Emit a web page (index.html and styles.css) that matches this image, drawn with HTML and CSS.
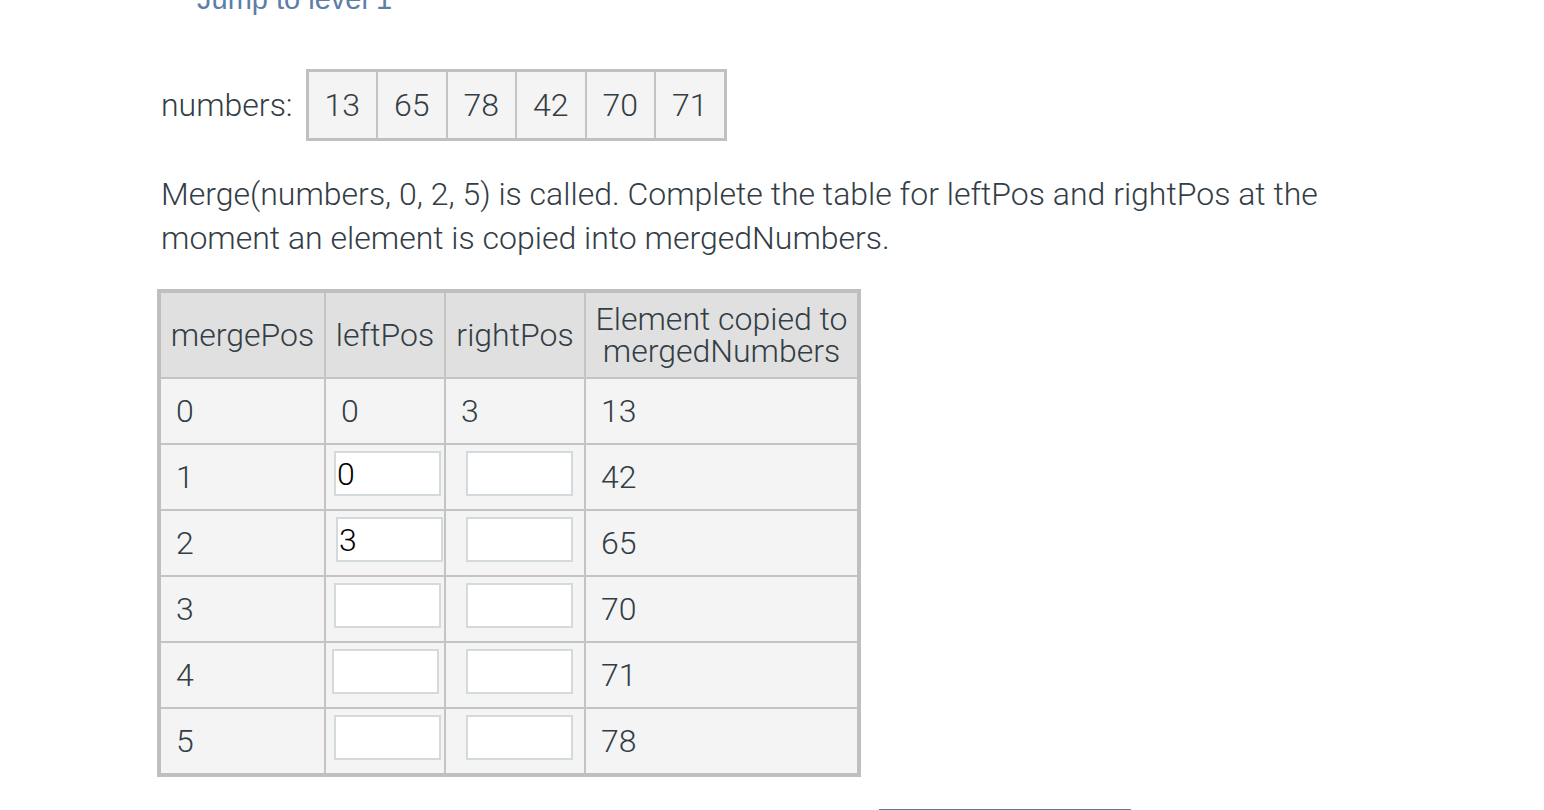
FILE: index.html
```html
<!DOCTYPE html>
<html>
<head>
<meta charset="utf-8">
<link rel="stylesheet" href="styles.css">
</head>
<body>
<main class="page">
  <a class="jump" href="#">Jump to level 1</a>
  <div class="array-row">
    <span class="array-label">numbers:</span>
    <div class="array">
      <span class="cell">13</span><span class="cell">65</span><span class="cell">78</span><span class="cell">42</span><span class="cell">70</span><span class="cell">71</span>
    </div>
  </div>
  <p class="prompt">Merge(numbers, 0, 2, 5) is called. Complete the table for leftPos and rightPos at the moment an element is copied into mergedNumbers.</p>
  <table class="merge">
    <thead>
      <tr><th class="c1">mergePos</th><th class="c2">leftPos</th><th class="c3">rightPos</th><th class="c4">Element copied to<br>mergedNumbers</th></tr>
    </thead>
    <tbody>
      <tr><td>0</td><td>0</td><td>3</td><td>13</td></tr>
      <tr><td>1</td><td class="in-l"><input class="box" value="0"></td><td class="in-r"><input class="box"></td><td>42</td></tr>
      <tr><td>2</td><td class="in-l"><input class="box shifted" value="3"></td><td class="in-r"><input class="box"></td><td>65</td></tr>
      <tr><td>3</td><td class="in-l"><input class="box"></td><td class="in-r"><input class="box"></td><td>70</td></tr>
      <tr><td>4</td><td class="in-l"><input class="box back"></td><td class="in-r"><input class="box"></td><td>71</td></tr>
      <tr><td>5</td><td class="in-l"><input class="box"></td><td class="in-r"><input class="box"></td><td>78</td></tr>
    </tbody>
  </table>
  <div class="actions"><span class="check-btn"></span></div>
</main>
</body>
</html>
```
FILE: styles.css
```css
html, body {
  margin: 0;
  padding: 0;
  background: #ffffff;
}
body {
  font-family: Roboto, "Noto Sans", sans-serif;
  font-weight: 300;
  color: #333d45;
  overflow: hidden;
}
.page {
  padding-left: 161px;
}
.jump {
  display: block;
  margin-top: -18px;
  margin-left: 36px;
  font-family: "Liberation Sans", Arial, sans-serif;
  font-weight: 400;
  font-size: 29px;
  line-height: 34px;
  color: #5d7ea7;
  text-decoration: none;
}
.array-row {
  display: flex;
  align-items: center;
  margin-top: 53px;
}
.array-label {
  font-size: 32px;
  margin-right: 13px;
}
.array {
  display: flex;
  border: 3px solid #c0c0c0;
  background: #f4f4f4;
}
.cell {
  width: 67.5px;
  height: 66px;
  display: flex;
  align-items: center;
  justify-content: center;
  font-size: 32px;
  border-left: 2px solid #c4c4c4;
}
.cell:first-child {
  border-left: none;
}
.prompt {
  margin: 31px 0 0 0;
  font-size: 32px;
  line-height: 44px;
  width: 1200px;
}
.merge {
  margin-top: 29px;
  margin-left: -4px;
  border-collapse: collapse;
  border: 4px solid #bfbfbf;
  font-size: 32px;
}
.merge th, .merge td {
  border: 2px solid #c4c4c4;
  padding: 0;
  font-weight: 300;
}
.merge th {
  background: #e0e0e0;
  height: 84px;
  line-height: 32px;
  text-align: center;
  padding: 0 8px;
}
.merge th.c1 { width: 147px; }
.merge th.c2 { width: 102px; }
.merge th.c3 { width: 122px; }
.merge th.c4 { width: 255px; }
.merge td {
  background: #f4f4f4;
  height: 64px;
  padding: 0 15px;
  text-align: left;
}
.merge td.in-l {
  vertical-align: top;
  padding: 6px 0 0 8px;
  height: 58px;
}
.merge td.in-r {
  vertical-align: top;
  padding: 6px 0 0 20px;
  height: 58px;
}
.box {
  display: block;
  box-sizing: border-box;
  width: 107px;
  height: 45px;
  border: 2px solid #d3dadd;
  background: #ffffff;
  font-family: Roboto, sans-serif;
  font-weight: 300;
  font-size: 32px;
  color: #000000;
  padding: 0 1px;
  margin: 0;
  outline: none;
}
.box.shifted { margin-left: 2px; }
.box.back { margin-left: -2px; }
.actions {
  display: flex;
  margin-top: 32px;
  padding-left: 718px;
}
.check-btn {
  width: 252px;
  height: 2px;
  border-top: 3px solid #6c7890;
}
```
